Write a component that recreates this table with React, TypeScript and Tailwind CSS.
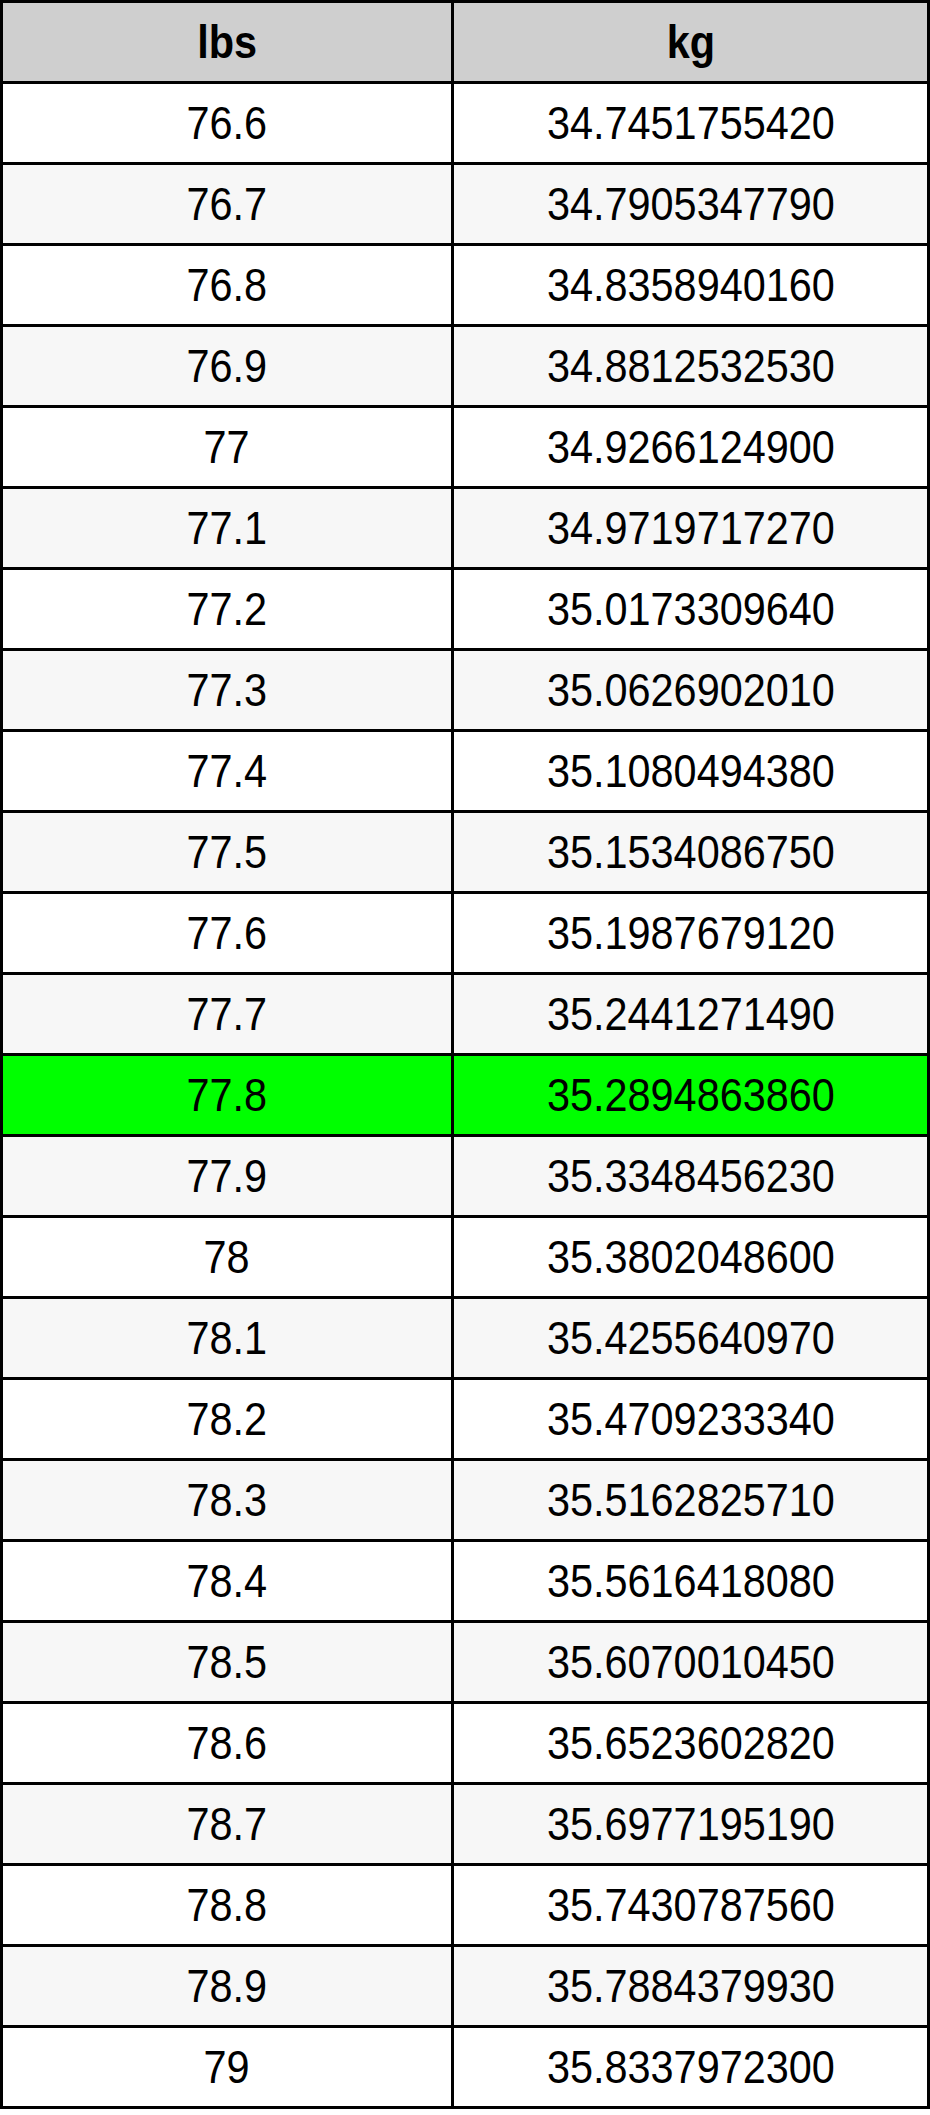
import React from 'react';

const ROWS: [string, string][] = [
  ['76.6', '34.7451755420'],
  ['76.7', '34.7905347790'],
  ['76.8', '34.8358940160'],
  ['76.9', '34.8812532530'],
  ['77', '34.9266124900'],
  ['77.1', '34.9719717270'],
  ['77.2', '35.0173309640'],
  ['77.3', '35.0626902010'],
  ['77.4', '35.1080494380'],
  ['77.5', '35.1534086750'],
  ['77.6', '35.1987679120'],
  ['77.7', '35.2441271490'],
  ['77.8', '35.2894863860'],
  ['77.9', '35.3348456230'],
  ['78', '35.3802048600'],
  ['78.1', '35.4255640970'],
  ['78.2', '35.4709233340'],
  ['78.3', '35.5162825710'],
  ['78.4', '35.5616418080'],
  ['78.5', '35.6070010450'],
  ['78.6', '35.6523602820'],
  ['78.7', '35.6977195190'],
  ['78.8', '35.7430787560'],
  ['78.9', '35.7884379930'],
  ['79', '35.8337972300'],
];

const HIGHLIGHT = '77.8';

function Cell({ children, bg, head }: { children: React.ReactNode; bg: string; head?: boolean }) {
  return (
    <div className={`${bg} h-[78px] flex items-center justify-center`}>
      <span
        className={`inline-block scale-x-[0.9] leading-none text-black text-[46px] ${
          head ? 'font-bold' : ''
        }`}
      >
        {children}
      </span>
    </div>
  );
}

export default function App() {
  return (
    <div className="w-[930px] bg-white pb-[6px] font-['Liberation_Sans',Arial,sans-serif]">
      <div className="grid grid-cols-[448px_1fr] gap-[3px] bg-black p-[3px]">
        <Cell bg="bg-[#cfcfcf]" head>lbs</Cell>
        <Cell bg="bg-[#cfcfcf]" head>kg</Cell>
        {ROWS.map(([lbs, kg], i) => {
          const bg = lbs === HIGHLIGHT ? 'bg-[#00ff00]' : i % 2 === 0 ? 'bg-white' : 'bg-[#f7f7f7]';
          return (
            <React.Fragment key={lbs}>
              <Cell bg={bg}>{lbs}</Cell>
              <Cell bg={bg}>{kg}</Cell>
            </React.Fragment>
          );
        })}
      </div>
    </div>
  );
}
